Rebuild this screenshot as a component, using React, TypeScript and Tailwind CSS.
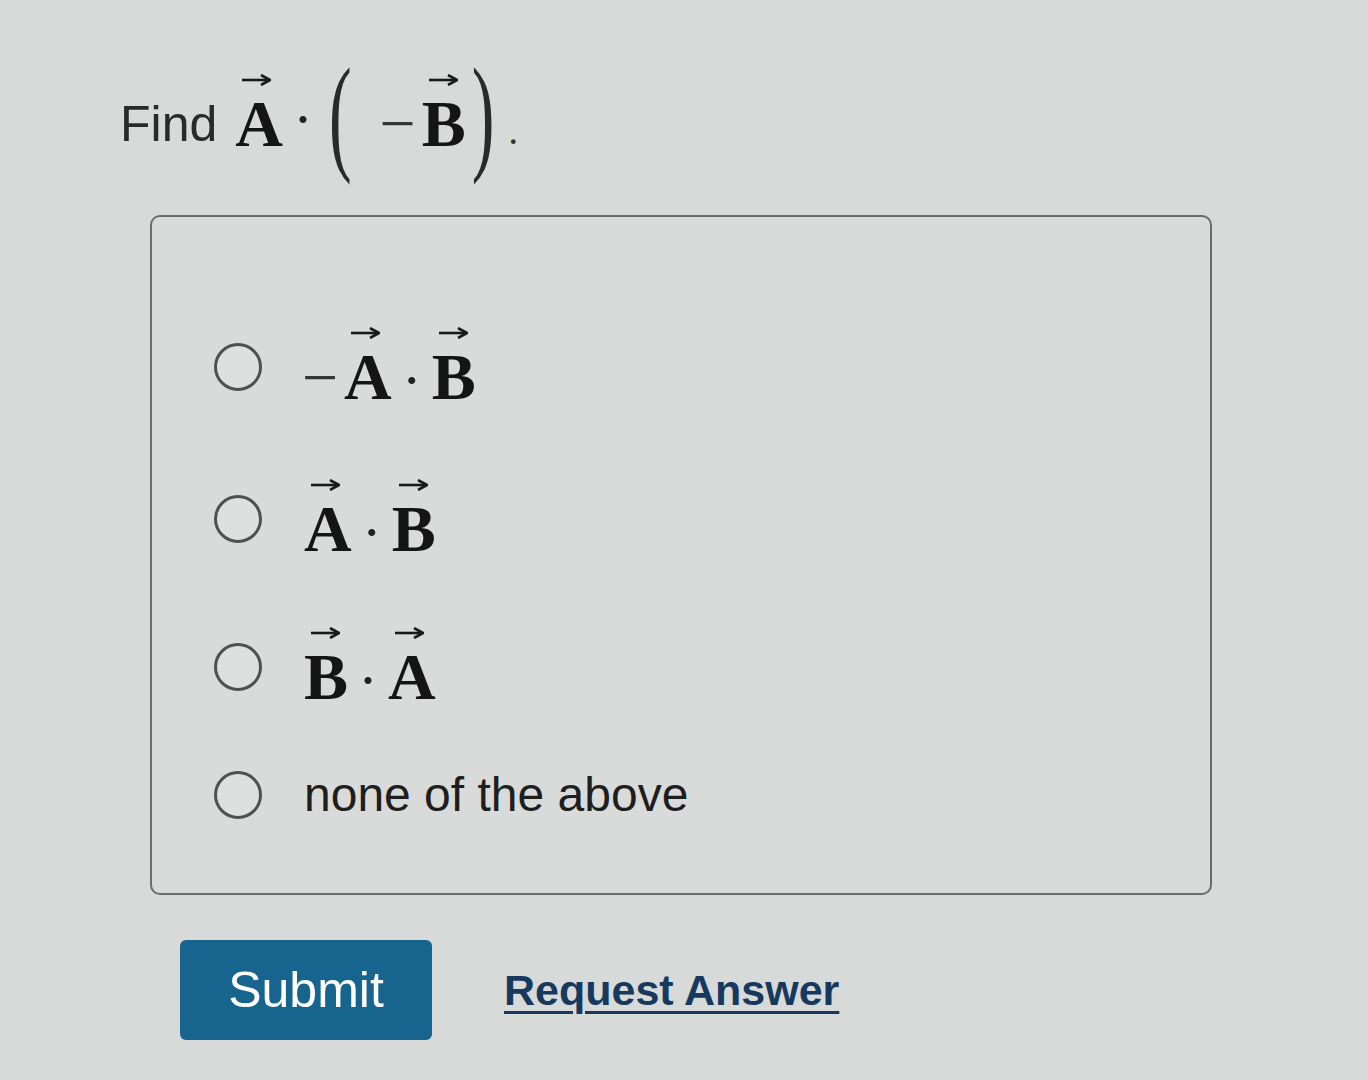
import React from 'react';

const serif = "font-['Liberation_Serif',serif]";
const sans = "font-['Liberation_Sans',Arial,sans-serif]";

function Arrow() {
  return (
    <svg width="30" height="12" viewBox="0 0 30 12" className="absolute left-[6px] -top-[17px]">
      <line x1="1" y1="6" x2="26" y2="6" stroke="#1a1a1a" strokeWidth="2.6" />
      <path d="M20 1 L29 6 L20 11" fill="none" stroke="#1a1a1a" strokeWidth="2.6" strokeLinejoin="miter" />
    </svg>
  );
}

function Vec({ letter }: { letter: string }) {
  return (
    <span className={`relative inline-block ${serif} font-bold text-[66px] leading-none text-[#151515]`}>
      <Arrow />
      {letter}
    </span>
  );
}

function Dot() {
  return <span className={`${serif} text-[60px] leading-none text-[#222] mx-[10px]`}>·</span>;
}

function Minus() {
  return <span className={`${serif} text-[64px] leading-none text-[#333] mr-[6px]`}>−</span>;
}

function Paren({ ch }: { ch: string }) {
  return (
    <span className={`${serif} inline-block text-[68px] leading-none text-[#2a2a2a] scale-y-[1.9] -translate-y-[6px] origin-center`}>{ch}</span>
  );
}

function Radio() {
  return <span className="w-[48px] h-[48px] rounded-full border-[3px] border-[#505050] bg-[#dedfdf] shrink-0" />;
}

export default function App() {
  return (
    <div className="min-h-screen w-full bg-[#d8d9d9] pl-[120px] pt-[64px]">
      {/* Question */}
      <div className="flex items-center h-[110px]">
        <span className={`${sans} text-[50px] text-[#2a2a2a] mr-[18px] mt-[10px]`}>Find</span>
        <span className="mt-[10px] flex items-center">
          <Vec letter="A" />
        </span>
        <Dot />
        <span className="ml-[6px]">
          <Paren ch="(" />
        </span>
        <span className="flex items-center mt-[10px] ml-[28px] mr-[6px]">
          <Minus />
          <Vec letter="B" />
        </span>
        <Paren ch=")" />
        <span className={`${serif} text-[40px] text-[#333] ml-[14px] mt-[24px]`}>.</span>
      </div>

      {/* Options box */}
      <div className="mt-[41px] ml-[30px] w-[1062px] h-[680px] border-2 border-[#6c6c6c] rounded-[10px] bg-[#d9dada] pl-[62px] pt-[110px]">
        <div className="flex items-center h-[80px] gap-[40px]">
          <Radio />
          <span className="flex items-end pt-[20px]">
            <Minus />
            <Vec letter="A" />
            <Dot />
            <Vec letter="B" />
          </span>
        </div>
        <div className="flex items-center h-[80px] gap-[42px] mt-[72px]">
          <Radio />
          <span className="flex items-end pt-[20px]">
            <Vec letter="A" />
            <Dot />
            <Vec letter="B" />
          </span>
        </div>
        <div className="flex items-center h-[80px] gap-[42px] mt-[68px]">
          <Radio />
          <span className="flex items-end pt-[20px]">
            <Vec letter="B" />
            <Dot />
            <Vec letter="A" />
          </span>
        </div>
        <div className="flex items-center h-[56px] gap-[42px] mt-[60px]">
          <Radio />
          <span className={`${sans} text-[48px] text-[#1e1e1e]`}>none of the above</span>
        </div>
      </div>

      {/* Actions */}
      <div className="flex items-center mt-[45px] ml-[60px] gap-[72px]">
        <button className={`${sans} w-[252px] h-[100px] rounded-[6px] bg-[#17648f] text-white text-[50px]`}>
          Submit
        </button>
        <a href="#" className={`${sans} font-bold text-[43px] text-[#163a5e] underline underline-offset-[6px] decoration-[3px]`}>
          Request Answer
        </a>
      </div>
    </div>
  );
}
